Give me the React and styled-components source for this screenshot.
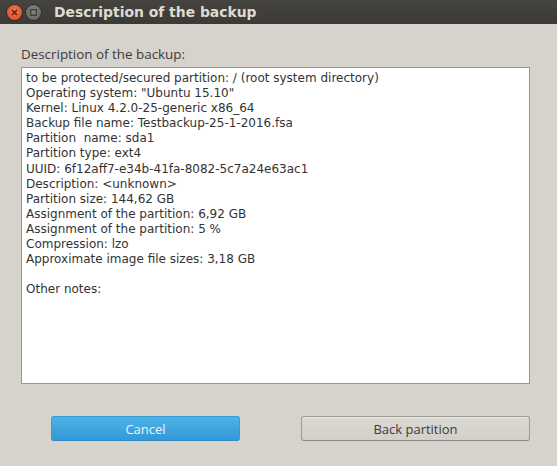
import React from 'react'
import styled, { createGlobalStyle } from 'styled-components'

const Global = createGlobalStyle`
html, body {
  margin: 0;
  padding: 0;
  background: #d6d2cc;
}
`

const Window = styled.div`
width: 557px;
height: 466px;
display: flex;
flex-direction: column;
background: #d6d2cc;
overflow: hidden;
`

const TitleBar = styled.div`
height: 24px;
display: flex;
align-items: center;
padding-left: 7px;
background: linear-gradient(#45443f, #3b3a36);
`

const WinButton = styled.div`
width: 15px;
height: 15px;
border-radius: 50%;
margin-right: 4px;
display: flex;
align-items: center;
justify-content: center;
background: ${({ close }) => close
  ? 'radial-gradient(circle at 50% 40%, #f4744a, #dd4b1e)'
  : 'radial-gradient(circle at 50% 40%, #86857f, #5f5e5a)'};
box-shadow: 0 0 0 1px rgba(0,0,0,0.25);
`

const Title = styled.span`
margin-left: 9px;
font-family: "DejaVu Sans", sans-serif;
font-weight: bold;
font-size: 13.9px;
color: #dfdbd2;
`

const Body = styled.div`
flex: 1;
display: flex;
flex-direction: column;
padding: 20px 27px 0 21px;
`

const Label = styled.div`
font-family: "Open Sans", sans-serif;
font-size: 13.4px;
color: #3c3c3c;
height: 23px;
line-height: 20px;
`

const TextView = styled.div`
height: 317px;
box-sizing: border-box;
background: #fff;
border: 1px solid #99968f;
padding: 3px 4px;
font-family: "DejaVu Sans", sans-serif;
font-size: 12px;
line-height: 15.1px;
color: #333;
white-space: pre;
`

const ButtonRow = styled.div`
display: flex;
gap: 61px;
padding-left: 30px;
margin-top: 32px;
`

const Button = styled.button`
width: ${({ w }) => w}px;
height: 25px;
box-sizing: border-box;
border-radius: 3px;
font-family: "Open Sans", sans-serif;
font-size: 13px;
cursor: pointer;
border: 1px solid ${({ primary }) => primary ? '#3a9ad3' : '#9c9a94'};
border-bottom-color: ${({ primary }) => primary ? '#2f8cc8' : '#8a8883'};
background: ${({ primary }) => primary
  ? 'linear-gradient(#4cb3e7, #3498d6)'
  : 'linear-gradient(#dcd9d3, #d3cfc9)'};
color: ${({ primary }) => primary ? '#eaf5fc' : '#3c3c3c'};
box-shadow: ${({ primary }) => primary ? 'none' : 'inset 0 1px 0 rgba(255,255,255,0.35)'};
`

const description = `to be protected/secured partition: / (root system directory)
Operating system: "Ubuntu 15.10"
Kernel: Linux 4.2.0-25-generic x86_64
Backup file name: Testbackup-25-1-2016.fsa
Partition  name: sda1
Partition type: ext4
UUID: 6f12aff7-e34b-41fa-8082-5c7a24e63ac1
Description: <unknown>
Partition size: 144,62 GB
Assignment of the partition: 6,92 GB
Assignment of the partition: 5 %
Compression: lzo
Approximate image file sizes: 3,18 GB

Other notes:`

const App = () => {
  return (
    <Window>
      <Global />
      <TitleBar>
        <WinButton close>
          <svg width="7" height="7" viewBox="0 0 7 7">
            <path d="M1 1L6 6M6 1L1 6" stroke="#5a1a08" strokeWidth="1.3" />
          </svg>
        </WinButton>
        <WinButton>
          <svg width="7" height="7" viewBox="0 0 7 7">
            <rect x="0.7" y="0.7" width="5.6" height="5.6" fill="none" stroke="#3a3935" strokeWidth="1.2" />
          </svg>
        </WinButton>
        <Title>Description of the backup</Title>
      </TitleBar>
      <Body>
        <Label>Description of the backup:</Label>
        <TextView>{description}</TextView>
        <ButtonRow>
          <Button primary w={189}>Cancel</Button>
          <Button w={229}>Back partition</Button>
        </ButtonRow>
      </Body>
    </Window>
  )
}

export default App
